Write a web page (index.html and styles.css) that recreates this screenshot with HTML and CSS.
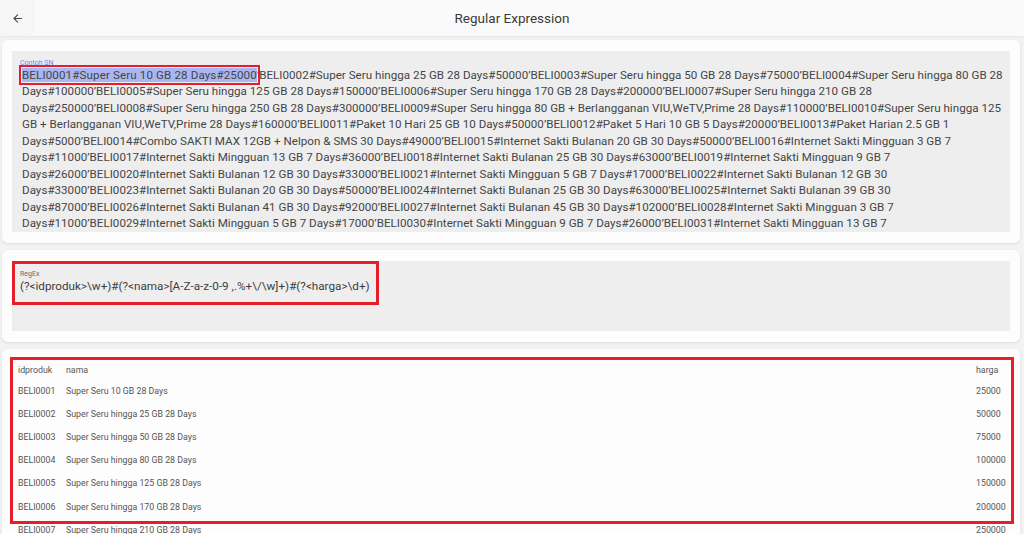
FILE: index.html
```html
<!DOCTYPE html>
<html lang="id">
<head>
<meta charset="utf-8">
<title>Regular Expression</title>
<link rel="stylesheet" href="styles.css">
</head>
<body>
<header class="appbar">
  <button class="back" aria-label="Kembali">
    <svg viewBox="0 0 24 24" width="13" height="13"><path d="M20 11H7.83l5.59-5.59L12 4l-8 8 8 8 1.41-1.41L7.83 13H20v-2z" fill="#444"/></svg>
  </button>
  <h1 class="title">Regular Expression</h1>
</header>
<main class="content">
  <section class="card">
    <div class="field field-sn">
      <div class="label label-blue">Contoh SN</div>
      <div class="sn">
        <span class="line"><span class="hl">BELI0001#Super Seru 10 GB 28 Days#25000</span>’BELI0002#Super Seru hingga 25 GB 28 Days#50000’BELI0003#Super Seru hingga 50 GB 28 Days#75000’BELI0004#Super Seru hingga 80 GB 28</span>
        <span class="line">Days#100000’BELI0005#Super Seru hingga 125 GB 28 Days#150000’BELI0006#Super Seru hingga 170 GB 28 Days#200000’BELI0007#Super Seru hingga 210 GB 28</span>
        <span class="line">Days#250000’BELI0008#Super Seru hingga 250 GB 28 Days#300000’BELI0009#Super Seru hingga 80 GB + Berlangganan VIU,WeTV,Prime 28 Days#110000’BELI0010#Super Seru hingga 125</span>
        <span class="line">GB + Berlangganan VIU,WeTV,Prime 28 Days#160000’BELI0011#Paket 10 Hari 25 GB 10 Days#50000’BELI0012#Paket 5 Hari 10 GB 5 Days#20000’BELI0013#Paket Harian 2.5 GB 1</span>
        <span class="line">Days#5000’BELI0014#Combo SAKTI MAX 12GB + Nelpon &amp; SMS 30 Days#49000’BELI0015#Internet Sakti Bulanan 20 GB 30 Days#50000’BELI0016#Internet Sakti Mingguan 3 GB 7</span>
        <span class="line">Days#11000’BELI0017#Internet Sakti Mingguan 13 GB 7 Days#36000’BELI0018#Internet Sakti Bulanan 25 GB 30 Days#63000’BELI0019#Internet Sakti Mingguan 9 GB 7</span>
        <span class="line">Days#26000’BELI0020#Internet Sakti Bulanan 12 GB 30 Days#33000’BELI0021#Internet Sakti Mingguan 5 GB 7 Days#17000’BELI0022#Internet Sakti Bulanan 12 GB 30</span>
        <span class="line">Days#33000’BELI0023#Internet Sakti Bulanan 20 GB 30 Days#50000’BELI0024#Internet Sakti Bulanan 25 GB 30 Days#63000’BELI0025#Internet Sakti Bulanan 39 GB 30</span>
        <span class="line">Days#87000’BELI0026#Internet Sakti Bulanan 41 GB 30 Days#92000’BELI0027#Internet Sakti Bulanan 45 GB 30 Days#102000’BELI0028#Internet Sakti Mingguan 3 GB 7</span>
        <span class="line">Days#11000’BELI0029#Internet Sakti Mingguan 5 GB 7 Days#17000’BELI0030#Internet Sakti Mingguan 9 GB 7 Days#26000’BELI0031#Internet Sakti Mingguan 13 GB 7</span>
      </div>
    </div>
  </section>

  <section class="card">
    <div class="field field-regex">
      <div class="regex-box">
        <div class="label label-grey">RegEx</div>
        <div class="regex">(?&lt;idproduk&gt;\w+)#(?&lt;nama&gt;[A-Z-a-z-0-9 ,.%+\/\w]+)#(?&lt;harga&gt;\d+)</div>
      </div>
    </div>
  </section>

  <section class="card card-table">
    <div class="table">
      <div class="row head"><span>idproduk</span><span>nama</span><span>harga</span></div>
      <div class="row"><span>BELI0001</span><span>Super Seru 10 GB 28 Days</span><span>25000</span></div>
      <div class="row"><span>BELI0002</span><span>Super Seru hingga 25 GB 28 Days</span><span>50000</span></div>
      <div class="row"><span>BELI0003</span><span>Super Seru hingga 50 GB 28 Days</span><span>75000</span></div>
      <div class="row"><span>BELI0004</span><span>Super Seru hingga 80 GB 28 Days</span><span>100000</span></div>
      <div class="row"><span>BELI0005</span><span>Super Seru hingga 125 GB 28 Days</span><span>150000</span></div>
      <div class="row"><span>BELI0006</span><span>Super Seru hingga 170 GB 28 Days</span><span>200000</span></div>
      <div class="row"><span>BELI0007</span><span>Super Seru hingga 210 GB 28 Days</span><span>250000</span></div>
    </div>
    <div class="annot-table"></div>
  </section>
</main>
</body>
</html>
```

FILE: styles.css
```css
* { box-sizing: border-box; }
html, body {
  margin: 0;
  height: 100%;
  overflow: hidden;
}
body {
  background: #f3f3f3;
  font-family: Roboto, "Liberation Sans", Arial, sans-serif;
  color: #444;
}
.appbar {
  height: 36px;
  background: #fafafa;
  display: flex;
  align-items: center;
  position: relative;
  box-shadow: 0 1px 2px rgba(0,0,0,0.06);
}
.back {
  width: 35px;
  height: 36px;
  border: 0;
  border-radius: 0 0 8px 0;
  background: #f6f6f6;
  display: flex;
  align-items: center;
  justify-content: center;
  padding: 0;
}
.title {
  flex: 1;
  margin: 0 35px 0 0;
  text-align: center;
  font-size: 13.5px;
  font-weight: 400;
  color: #3a3a3a;
}
.content {
  padding: 4px 4px 0 2px;
  display: flex;
  flex-direction: column;
  gap: 7px;
}
.card {
  background: #fdfdfd;
  border-radius: 6px;
  box-shadow: 0 1px 3px rgba(0,0,0,0.10);
  padding: 11px 10px;
  position: relative;
}
.field {
  background: #eeeeee;
}
.field-sn {
  padding: 8px 10px 0 10px;
}
.label {
  font-size: 7px;
  line-height: 8px;
}
.label-blue {
  color: #6f86ee;
  margin-left: -2px;
}
.label-grey {
  color: #6a6a6a;
}
.sn {
  font-size: 11.6px;
  line-height: 16.45px;
  color: #454545;
  letter-spacing: 0.02px;
}
.line {
  display: block;
  white-space: nowrap;
}
.hl {
  background: #aab6f2;
  outline: 2px solid #e41e2b;
  outline-offset: 1px;
  letter-spacing: 0.12px;
}
.field-regex {
  height: 70px;
}
.regex-box {
  display: inline-block;
  border: 3px solid #e41e2b;
  padding: 6px 6px 8px 5px;
}
.regex {
  font-size: 11.7px;
  line-height: 16px;
  color: #3d3d3d;
}
.card-table {
  padding: 13px 15px 0 16px;
  min-height: 200px;
}
.table {
  display: flex;
  flex-direction: column;
}
.row {
  display: grid;
  grid-template-columns: 48px 1fr 29px;
  font-size: 8.8px;
  line-height: 23px;
  height: 23.1px;
  color: #555;
}
.row.head {
  height: 18.5px;
  line-height: 16px;
}
.annot-table {
  position: absolute;
  left: 8px;
  top: 8px;
  width: 1004px;
  height: 167px;
  border: 3px solid #e41e2b;
  pointer-events: none;
}
```
